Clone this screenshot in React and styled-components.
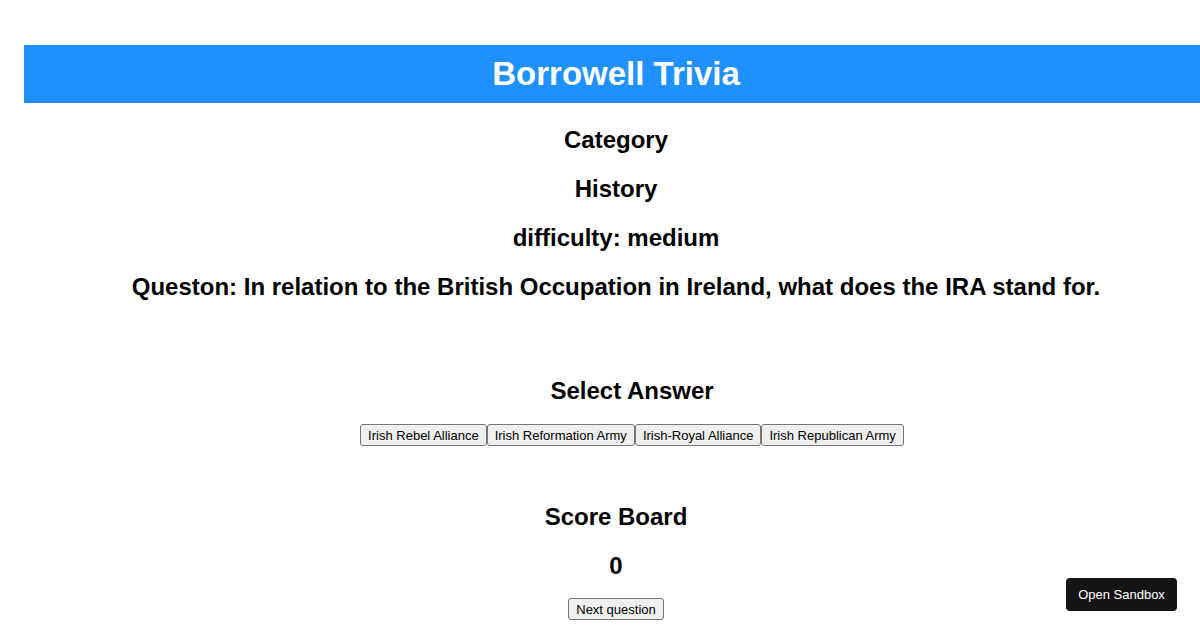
import React from "react";
import styled, { createGlobalStyle } from "styled-components";

const GlobalStyle = createGlobalStyle`
  html {
    overflow: hidden;
  }
  body {
    margin: 8px 0 8px 8px;
    background: #ffffff;
    color: #000000;
    font-family: "Liberation Sans", Arial, sans-serif;
  }
`;

const answers = [
  "Irish Rebel Alliance",
  "Irish Reformation Army",
  "Irish-Royal Alliance",
  "Irish Republican Army",
];

const App = () => {
  return (
    <>
      <GlobalStyle />
      <Page>
        <Header>Borrowell Trivia</Header>
        <Heading>Category</Heading>
        <Heading>History</Heading>
        <Heading>difficulty: medium</Heading>
        <Heading>
          Queston: In relation to the British Occupation in Ireland, what does
          the IRA stand for.
        </Heading>
        <AnswerSection>
          <Heading $after={19}>Select Answer</Heading>
          <ButtonRow>
            {answers.map((a) => (
              <Button key={a}>{a}</Button>
            ))}
          </ButtonRow>
        </AnswerSection>
        <ScoreSection>
          <Heading>Score Board</Heading>
          <Heading $after={18}>0</Heading>
          <Button>Next question</Button>
        </ScoreSection>
      </Page>
      <SandboxButton>Open Sandbox</SandboxButton>
    </>
  );
};
export default App;

const Page = styled.div`
  margin-left: 16px;
  margin-right: -8px;
  text-align: center;
`;

const Header = styled.h1`
  margin: 37px 0 22px;
  padding: 10px 0;
  line-height: 38px;
  font-size: 33px;
  font-weight: bold;
  color: #ffffff;
  background: #1e90ff;
`;

const Heading = styled.h2`
  margin: 20px 0 ${(p) => (p.$after ?? 20)}px;
  font-size: 24px;
  line-height: 29px;
  font-weight: bold;
`;

const AnswerSection = styled.div`
  padding-left: 32px;
  margin-top: 75px;
`;

const ButtonRow = styled.div`
  display: flex;
  justify-content: center;
`;

const Button = styled.button`
  height: 22px;
  padding: 1px 7px;
  font-family: "Liberation Sans", Arial, sans-serif;
  font-size: 13px;
  color: #000000;
  background: #efefef;
  border: 1px solid #767676;
  border-radius: 3px;
`;

const ScoreSection = styled.div`
  margin-top: 56px;
`;

const SandboxButton = styled.button`
  position: fixed;
  right: 23px;
  bottom: 19px;
  width: 111px;
  height: 33px;
  padding: 0;
  font-family: "Liberation Sans", Arial, sans-serif;
  font-size: 13px;
  color: #ffffff;
  background: #151515;
  border: none;
  border-radius: 4px;
`;
